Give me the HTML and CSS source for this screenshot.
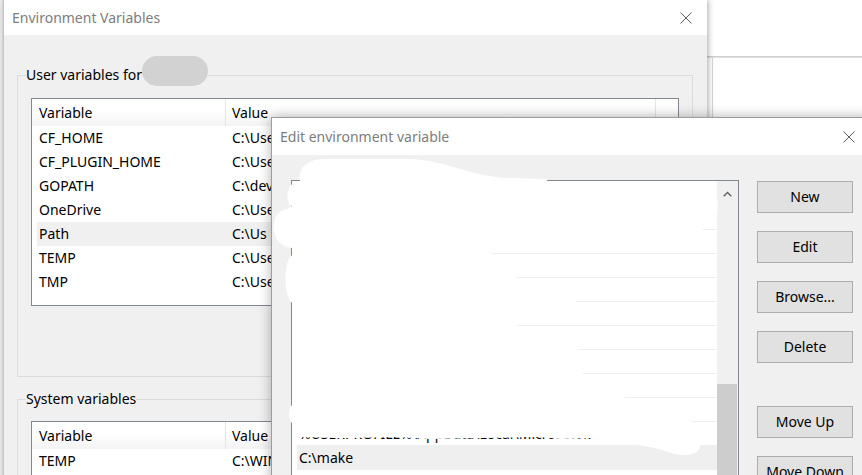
FILE: index.html
```html
<!DOCTYPE html>
<html lang="en">
<head>
	<meta charset="UTF-8">
	<title>Environment Variables</title>
	<link rel="stylesheet" href="styles.css">
</head>
<body>
	<div class="desk">
		<div class="behind">
			<div class="behind-rule"></div>
			<div class="behind-pane"></div>
		</div>

		<div class="window env">
			<div class="titlebar">
				<span class="title">Environment Variables</span>
				<svg class="close" width="12" height="12" viewBox="0 0 12 12"><path d="M0.5 0.5L11.5 11.5M11.5 0.5L0.5 11.5"/></svg>
			</div>
			<div class="window-body">
				<fieldset class="group user">
					<legend>User variables for<span class="redact"></span></legend>
					<div class="grid">
						<div class="grid-head"><span class="c-var">Variable</span><span class="c-val">Value</span><span class="c-end"></span></div>
						<div class="grid-row"><span class="c-var">CF_HOME</span><span class="c-val">C:\Users\user\.cf</span></div>
						<div class="grid-row"><span class="c-var">CF_PLUGIN_HOME</span><span class="c-val">C:\Users\user\.cf</span></div>
						<div class="grid-row"><span class="c-var">GOPATH</span><span class="c-val">C:\dev\go</span></div>
						<div class="grid-row"><span class="c-var">OneDrive</span><span class="c-val">C:\Users\user\OneDrive</span></div>
						<div class="grid-row selected"><span class="c-var">Path</span><span class="c-val">C:\Us ers\user\AppData\Local\Microsoft\WindowsApps;</span></div>
						<div class="grid-row"><span class="c-var">TEMP</span><span class="c-val">C:\Users\user\AppData\Local\Temp</span></div>
						<div class="grid-row"><span class="c-var">TMP</span><span class="c-val">C:\Users\user\AppData\Local\Temp</span></div>
					</div>
				</fieldset>
				<fieldset class="group system">
					<legend>System variables</legend>
					<div class="grid">
						<div class="grid-head"><span class="c-var">Variable</span><span class="c-val">Value</span><span class="c-end"></span></div>
						<div class="grid-row"><span class="c-var">TEMP</span><span class="c-val">C:\WINDOWS\TEMP</span></div>
					</div>
				</fieldset>
			</div>
		</div>

		<div class="window edit">
			<div class="titlebar">
				<span class="title">Edit environment variable</span>
				<svg class="close" width="12" height="12" viewBox="0 0 12 12"><path d="M0.5 0.5L11.5 11.5M11.5 0.5L0.5 11.5"/></svg>
			</div>
			<div class="window-body edit-body">
				<div class="path-list">
					<div class="path-rows">
						<div class="path-row"></div>
						<div class="path-row"></div>
						<div class="path-row"></div>
						<div class="path-row"></div>
						<div class="path-row"></div>
						<div class="path-row"></div>
						<div class="path-row"></div>
						<div class="path-row"></div>
						<div class="path-row"></div>
						<div class="path-row"></div>
						<div class="path-row">%USERPROFILE%\AppData\Local\Microsoft\WindowsApps</div>
						<div class="path-row selected">C:\make</div>
					</div>
					<div class="scrollbar">
						<div class="sb-up"><svg width="9" height="6" viewBox="0 0 9 6"><polyline points="0.7,5.3 4.5,1.5 8.3,5.3"/></svg></div>
						<div class="sb-thumb"></div>
					</div>
				</div>
				<div class="actions">
					<div class="btn">New</div>
					<div class="btn">Edit</div>
					<div class="btn">Browse...</div>
					<div class="btn">Delete</div>
					<div class="btn spaced">Move Up</div>
					<div class="btn">Move Down</div>
				</div>
			</div>
		</div>

		<!-- white scribble that hides the path entries -->
		<svg class="scribble" width="862" height="475" viewBox="0 0 862 475">
			<path d="M300 181 C298 170 305 159 325 159 L410 159 C450 161 470 177 510 178 L547 179 L547 183 L700 183 C722 183 724 222 704 224 L702 231 L492 251 L490 254 L515 276 L516 278 L574 300 L576 302 L519 324 L517 326 L576 348 L578 350 L581 372 L583 374 L623 396 L625 398 L685 420 L700 424 L702 438 L700 446 C698 457 680 457 665 451 C650 446 640 445 630 445 L598 444 L594 438 L560 439 L540 437 L485 438 L430 439 L400 437 L340 438 L300 437 L296 425 C287 424 286 403 298 402 L293 400 L293 303 C283 300 283 257 293 255 L293 248 C268 247 268 210 288 209 L292 206 C285 205 285 181 300 181 Z"/>
		</svg>
	</div>
</body>
</html>
```

FILE: styles.css
```css
*{
	margin: 0;
	padding: 0;
	box-sizing: border-box;
}
body{
	width: 862px;
	height: 475px;
	overflow: hidden;
	background-color: #f0f0f0;
	font-family: "Noto Sans", "Segoe UI", sans-serif;
	font-size: 14px;
	color: #000;
}
.desk{
	position: relative;
	width: 862px;
	height: 475px;
}
.behind{
	position: absolute;
	left: 700px;
	top: 0;
	width: 162px;
	height: 475px;
	background-color: #fff;
}
.behind .behind-rule{
	margin-top: 56px;
	height: 2px;
	background: linear-gradient(#c9c9c9, #e4e4e4);
}
.behind .behind-pane{
	margin-left: 12px;
	height: 420px;
	border-left: 1px solid #d6d6d6;
}

/* windows */
.window{
	position: absolute;
	background-color: #f0f0f0;
}
.window .titlebar{
	display: flex;
	align-items: center;
	justify-content: space-between;
	background-color: #fff;
	padding: 0 15px 0 8px;
}
.window .title{
	color: #7d7d7d;
	white-space: nowrap;
}
.window .close path{
	stroke: #5c5c5c;
	stroke-width: 1;
	fill: none;
}
.env{
	left: 3px;
	top: 0;
	width: 704px;
	height: 480px;
	border-left: 1px solid #c4c4c4;
	box-shadow: 1px 0 6px rgba(0,0,0,0.35);
	z-index: 1;
}
.env .titlebar{
	height: 35px;
}
.env .window-body{
	padding: 0 14px 0 13px;
}
.group{
	min-width: 0;
	border: 1px solid #dcdcdc;
	padding: 0 8px;
}
.group legend{
	line-height: 20px;
	padding: 0;
	white-space: nowrap;
}
.group .redact{
	display: inline-block;
	width: 66px;
	height: 30px;
	margin: -9px 0 -6px 0;
	border-radius: 15px;
	background-color: #d2d2d3;
}
.user{
	margin-top: 30px;
	padding-top: 13px;
	padding-bottom: 70px;
}
.system{
	margin-top: 12px;
	padding-top: 12px;
	height: 200px;
}
.grid{
	margin: 0 5px;
	border: 1px solid #828790;
	background-color: #fff;
	overflow: hidden;
}
.user .grid{
	height: 208px;
}
.system .grid{
	height: 150px;
}
.grid .grid-head{
	display: flex;
	height: 27px;
	padding-left: 5px;
	background: linear-gradient(#fff 40%, #f3f3f3);
}
.grid .grid-head span{
	line-height: 24px;
	padding-top: 2px;
}
.grid .grid-row{
	display: flex;
	height: 24px;
	line-height: 24px;
	margin-left: 5px;
	white-space: nowrap;
}
.grid .grid-row.selected{
	background-color: #f0f0f0;
}
.grid .c-var{
	flex: none;
	width: 189px;
	padding-left: 2px;
}
.grid .c-val{
	flex: none;
	width: 430px;
	padding-left: 6px;
	overflow: hidden;
}
.grid .grid-head .c-var,
.grid .grid-head .c-val{
	border-right: 1px solid #e5e5e5;
}
.grid .c-end{
	flex: 1;
}

/* edit dialog */
.edit{
	left: 271px;
	top: 117px;
	width: 600px;
	height: 420px;
	border: 1px solid #9d9d9d;
	box-shadow: 0 0 12px rgba(0,0,0,0.3);
	z-index: 2;
}
.edit .titlebar{
	height: 37px;
}
.edit-body{
	display: flex;
	gap: 18px;
	padding: 25px 0 0 19px;
}
.path-list{
	display: flex;
	flex: none;
	width: 448px;
	height: 330px;
	border: 1px solid #828790;
	background-color: #fff;
}
.path-list .path-rows{
	flex: 1;
	min-width: 0;
	padding: 1px 0 0 5px;
}
.path-list .path-row{
	height: 24px;
	line-height: 23px;
	padding-left: 2px;
	border-bottom: 1px solid #f0f0f0;
	white-space: nowrap;
	overflow: hidden;
}
.path-list .path-row.selected{
	background-color: #efefef;
}
.scrollbar{
	flex: none;
	width: 21px;
	background-color: #f0f0f0;
}
.scrollbar .sb-up{
	display: flex;
	align-items: center;
	justify-content: center;
	height: 24px;
	padding-top: 1px;
}
.scrollbar .sb-up polyline{
	fill: none;
	stroke: #606060;
	stroke-width: 1.4;
}
.scrollbar .sb-thumb{
	margin: 179px 1px 0 0;
	height: 200px;
	background-color: #cdcdcd;
}
.actions{
	display: flex;
	flex-direction: column;
	gap: 18px;
	width: 96px;
	padding-top: 1px;
}
.actions .btn{
	height: 32px;
	line-height: 30px;
	text-align: center;
	border: 1px solid #adadad;
	background-color: #e1e1e1;
	white-space: nowrap;
}
.actions .btn.spaced{
	margin-top: 25px;
}

.scribble{
	position: absolute;
	left: 0;
	top: 0;
	z-index: 5;
	pointer-events: none;
}
.scribble path{
	fill: #fff;
}
```
